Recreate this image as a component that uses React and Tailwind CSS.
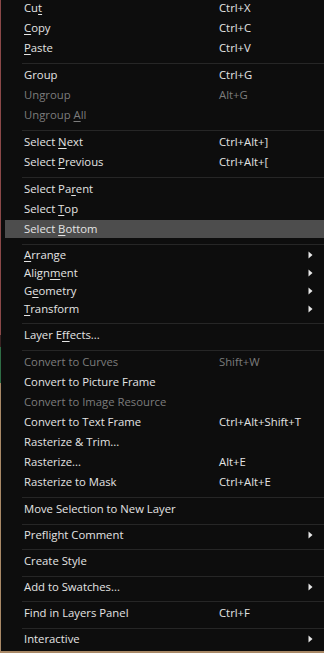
import React from 'react';

const items = [
  { label: 'Cut', u: 2, sc: 'Ctrl+X' },
  { label: 'Copy', u: 0, sc: 'Ctrl+C' },
  { label: 'Paste', u: 0, sc: 'Ctrl+V' },
  'sep',
  { label: 'Group', sc: 'Ctrl+G' },
  { label: 'Ungroup', sc: 'Alt+G', dis: true },
  { label: 'Ungroup All', u: 8, dis: true },
  'sep',
  { label: 'Select Next', u: 7, sc: 'Ctrl+Alt+]' },
  { label: 'Select Previous', u: 7, sc: 'Ctrl+Alt+[' },
  'sep',
  { label: 'Select Parent', u: 9 },
  { label: 'Select Top', u: 7 },
  { label: 'Select Bottom', u: 7, hl: true },
  'sep',
  { label: 'Arrange', u: 0, sub: true },
  { label: 'Alignment', u: 5, sub: true },
  { label: 'Geometry', u: 1, sub: true },
  { label: 'Transform', u: 0, sub: true },
  'sep',
  { label: 'Layer Effects...', u: 7 },
  'sep',
  { label: 'Convert to Curves', sc: 'Shift+W', dis: true },
  { label: 'Convert to Picture Frame' },
  { label: 'Convert to Image Resource', dis: true },
  { label: 'Convert to Text Frame', sc: 'Ctrl+Alt+Shift+T' },
  { label: 'Rasterize & Trim...' },
  { label: 'Rasterize...', sc: 'Alt+E' },
  { label: 'Rasterize to Mask', sc: 'Ctrl+Alt+E' },
  'sep',
  { label: 'Move Selection to New Layer' },
  'sep',
  { label: 'Preflight Comment', sub: true },
  'sep',
  { label: 'Create Style' },
  'sep',
  { label: 'Add to Swatches...', sub: true },
  'sep',
  { label: 'Find in Layers Panel', sc: 'Ctrl+F' },
  'sep',
  { label: 'Interactive', sub: true },
];

const Label = ({ label, u }) => {
  if (u === undefined) return <span>{label}</span>;
  return (
    <span>
      {label.slice(0, u)}
      <u className="underline underline-offset-2 decoration-1">{label[u]}</u>
      {label.slice(u + 1)}
    </span>
  );
};

const Row = ({ item }) => {
  const color = item.dis ? 'text-[#7c7c7c]' : 'text-[#e4e4e4]';
  return (
    <div className={`${item.sub ? 'h-[18px]' : 'h-5'} flex items-stretch`}>
      <div className={`flex-1 flex items-center ml-1 my-px ${item.hl ? 'bg-[#4d4d4d]' : ''} ${color}`}>
        <div className="w-[214px] pl-[19px] whitespace-nowrap">
          <Label label={item.label} u={item.u} />
        </div>
        <div className="flex-1 whitespace-nowrap">{item.sc}</div>
        {item.sub && (
          <svg width="5" height="8" viewBox="0 0 5 8" className="mr-[11px]">
            <path d="M0.5 0.5 L4.5 4 L0.5 7.5 Z" fill="#e8e8e8" />
          </svg>
        )}
      </div>
    </div>
  );
};

export default function App() {
  return (
    <div className="w-[324px] h-[653px] overflow-hidden bg-[#a88866] flex flex-col" style={{ fontFamily: '"Open Sans", "Noto Sans", sans-serif' }}>
      <div className="flex flex-1 min-h-0">
        <div className="w-px flex flex-col">
          <div className="h-[335px] bg-[#8a4848]" />
          <div className="h-[12px] bg-[#3a2222]" />
          <div className="h-[36px] bg-[#2f6d45]" />
          <div className="flex-1 bg-[#a88866]" />
        </div>
        <div className="flex-1 bg-[#0d0d0d] text-[11.3px] leading-none overflow-hidden">
          <div className="-mt-[2px]">
            {items.map((item, i) =>
              item === 'sep' ? (
                <div key={i} className="h-[7px] pt-[5px] pl-[21px]">
                  <div className="h-px bg-[#262626]" />
                </div>
              ) : (
                <Row key={i} item={item} />
              )
            )}
          </div>
        </div>
      </div>
      <div className="h-[2px] bg-[#a88866]" />
    </div>
  );
}
